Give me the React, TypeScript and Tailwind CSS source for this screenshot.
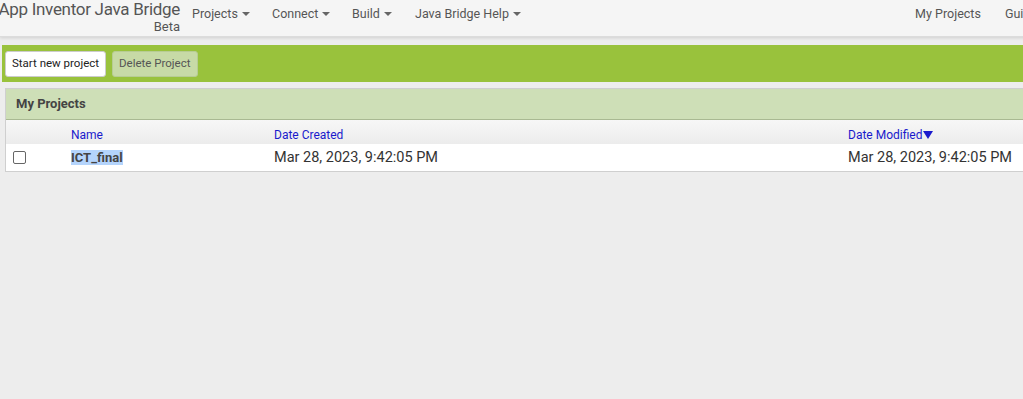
import React from 'react';

function Caret() {
  return <span className="ml-[4px] inline-block h-0 w-0 border-x-[4px] border-t-[4px] border-x-transparent border-t-[#666] align-middle" />;
}

const menus = [
  { label: 'Projects', w: 'w-[80px]' },
  { label: 'Connect', w: 'w-[80px]' },
  { label: 'Build', w: 'w-[63px]' },
  { label: 'Java Bridge Help', w: 'w-[110px]' },
];

export default function App() {
  return (
    <div className="min-h-[399px] w-full overflow-hidden bg-[#ededed] font-['Roboto',sans-serif] text-[#333]">
      <div className="w-[1060px]">
        <header className="flex h-[37px] items-start border-b border-[#dcdcdc] bg-[#f5f5f5] shadow-[0_1px_3px_rgba(0,0,0,0.12)]">
          <div className="flex w-[180px] shrink-0 flex-col items-end whitespace-nowrap leading-none">
            <span className="mt-[1px] text-[17px] tracking-[-0.3px] text-[#555]">App Inventor Java Bridge</span>
            <span className="mt-[2px] text-[13px] text-[#555]">Beta</span>
          </div>
          <nav className="ml-[12px] flex h-[28px] items-center text-[12.5px] text-[#555]">
            {menus.map((m) => (
              <span key={m.label} className={`flex items-center whitespace-nowrap ${m.w}`}>
                {m.label}
                <Caret />
              </span>
            ))}
          </nav>
          <div className="ml-auto mr-[23px] flex h-[28px] items-center gap-[24px] whitespace-nowrap text-[12.5px] text-[#555]">
            <span>My Projects</span>
            <span>Guide</span>
          </div>
        </header>

        <div className="ml-[2px] mt-[8px] flex h-[37px] items-center gap-[6px] bg-[#99c23c] px-[3px]">
          <button className="h-[26px] rounded-[3px] border border-[#ccc] bg-white px-[6px] text-[11.5px] text-[#222]">
            Start new project
          </button>
          <button className="h-[26px] rounded-[3px] border border-[#b7cc93] bg-[#c7daa6] px-[6px] text-[11.5px] text-[#555]">
            Delete Project
          </button>
        </div>

        <section className="ml-[5px] mt-[6px] border border-[#cfcfcf] bg-white">
          <div className="flex h-[31px] items-center border-b border-[#a9b992] bg-[#cedfb7] pl-[10px] text-[13px] font-bold text-[#444]">
            My Projects
          </div>
          <div className="flex h-[24px] items-end bg-gradient-to-b from-[#f7f7f7] to-[#ececec] pb-0 text-[12px] text-[#1a1acc]">
            <span className="ml-[65px] w-[203px]">Name</span>
            <span className="w-[574px]">Date Created</span>
            <span className="flex items-center">
              Date Modified
              <span className="ml-[1px] inline-block h-0 w-0 border-x-[5px] border-t-[8px] border-x-transparent border-t-[#1a1acc]" />
            </span>
          </div>
          <div className="flex h-[27px] items-center text-[14.5px] text-[#333]">
            <span className="ml-[7px] h-[13px] w-[13px] rounded-[2px] border border-[#666] bg-white" />
            <span className="ml-[45px] w-[203px]">
              <span className="bg-[#b4d4fc] text-[13px] font-bold text-[#444]">ICT_final</span>
            </span>
            <span className="w-[574px]">Mar 28, 2023, 9:42:05 PM</span>
            <span>Mar 28, 2023, 9:42:05 PM</span>
          </div>
        </section>
      </div>
    </div>
  );
}
